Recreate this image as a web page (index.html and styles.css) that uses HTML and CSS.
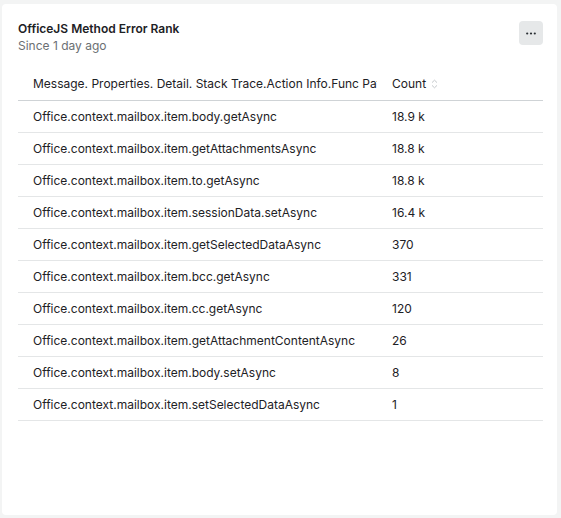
FILE: index.html
```html
<!DOCTYPE html>
<html>
<head>
<meta charset="utf-8">
<link rel="stylesheet" href="styles.css">
</head>
<body>
<div class="card">
  <div class="card-head">
    <div class="titles">
      <div class="title">OfficeJS Method Error Rank</div>
      <div class="subtitle">Since 1 day ago</div>
    </div>
    <button class="more" aria-label="More">
      <svg width="10" height="3" viewBox="0 0 10 3"><circle cx="1.2" cy="1.5" r="1.1" fill="#2a2f33"/><circle cx="5" cy="1.5" r="1.1" fill="#2a2f33"/><circle cx="8.8" cy="1.5" r="1.1" fill="#2a2f33"/></svg>
    </button>
  </div>
  <table class="tbl">
    <colgroup><col class="c1"><col class="c2"></colgroup>
    <thead>
      <tr>
        <th><div class="clip">Message. Properties. Detail. Stack Trace.Action Info.Func Path</div></th>
        <th><span class="count-h">Count <svg class="sort" width="7" height="10" viewBox="0 0 7 10"><path d="M1 3.6 L3.5 1.2 L6 3.6" fill="none" stroke="#c4c8cb" stroke-width="1"/><path d="M1 6.4 L3.5 8.8 L6 6.4" fill="none" stroke="#c4c8cb" stroke-width="1"/></svg></span></th>
      </tr>
    </thead>
    <tbody>
      <tr><td>Office.context.mailbox.item.body.getAsync</td><td>18.9 k</td></tr>
      <tr><td>Office.context.mailbox.item.getAttachmentsAsync</td><td>18.8 k</td></tr>
      <tr><td>Office.context.mailbox.item.to.getAsync</td><td>18.8 k</td></tr>
      <tr><td>Office.context.mailbox.item.sessionData.setAsync</td><td>16.4 k</td></tr>
      <tr><td>Office.context.mailbox.item.getSelectedDataAsync</td><td>370</td></tr>
      <tr><td>Office.context.mailbox.item.bcc.getAsync</td><td>331</td></tr>
      <tr><td>Office.context.mailbox.item.cc.getAsync</td><td>120</td></tr>
      <tr><td>Office.context.mailbox.item.getAttachmentContentAsync</td><td>26</td></tr>
      <tr><td>Office.context.mailbox.item.body.setAsync</td><td>8</td></tr>
      <tr><td>Office.context.mailbox.item.setSelectedDataAsync</td><td>1</td></tr>
    </tbody>
  </table>
</div>
</body>
</html>
```
FILE: styles.css
```css
* { box-sizing: border-box; }
html, body { margin: 0; height: 100%; }
body {
  background: #f3f4f4;
  font-family: Inter, "Noto Sans", sans-serif;
  color: #1d2125;
  padding: 4px 4px 3px 2px;
}
.card {
  background: #fff;
  border-radius: 4px;
  height: 511px;
  padding: 17px 14px 0 16px;
}
.card-head {
  display: flex;
  justify-content: space-between;
  align-items: flex-start;
}
.title {
  font-size: 12px;
  font-weight: 600;
  line-height: 16px;
}
.subtitle {
  font-size: 12px;
  color: #6b6f73;
  line-height: 16px;
  margin-top: 1px;
}
.more {
  width: 24px;
  height: 24px;
  border: none;
  border-radius: 4px;
  background: #e6e8e9;
  display: flex;
  align-items: center;
  justify-content: center;
  padding: 0;
}
.tbl {
  margin-top: 14px;
  width: 525px;
  border-collapse: collapse;
  table-layout: fixed;
  font-size: 12px;
}
.c1 { width: 359px; }
.tbl th, .tbl td {
  text-align: left;
  font-weight: 400;
  height: 32px;
  padding: 0 0 0 15px;
  white-space: nowrap;
  overflow: hidden;
  border-bottom: 1px solid #e4e6e7;
}
.tbl th {
  border-bottom-color: #cfd3d6;
  color: #1d2125;
}
.clip { overflow: hidden; white-space: nowrap; }
.count-h { display: inline-flex; align-items: center; gap: 5px; }
.sort { display: block; }
```
